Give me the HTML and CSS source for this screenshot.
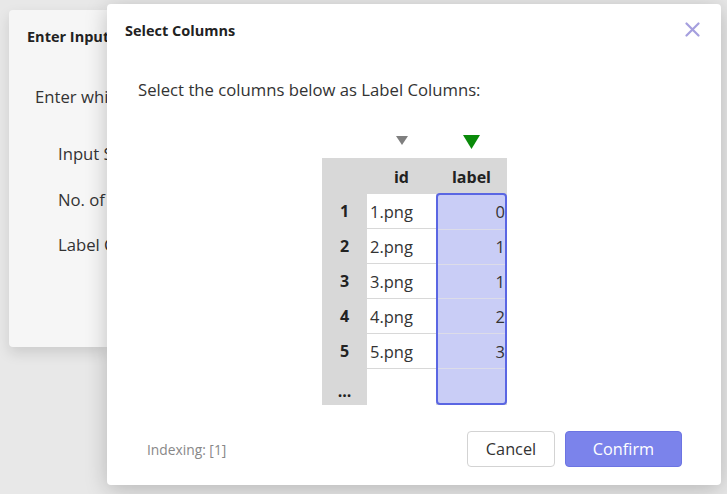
FILE: index.html
```html
<!DOCTYPE html>
<html>
<head>
<meta charset="utf-8">
<link rel="stylesheet" href="styles.css">
</head>
<body>
<div class="stage">
  <div class="dialog back">
    <div class="title">Enter Inputs</div>
    <div class="back-body">
      <p class="msg">Enter which settings to use:</p>
      <div class="field">Input Size</div>
      <div class="field">No. of Classes</div>
      <div class="field">Label Columns</div>
    </div>
  </div>

  <div class="dialog front">
    <div class="head">
      <div class="title">Select Columns</div>
      <svg class="close" width="15" height="15" viewBox="0 0 15 15"><path d="M1.5 1.5 L13.5 13.5 M13.5 1.5 L1.5 13.5" stroke="#a59fde" stroke-width="2.2" stroke-linecap="round" fill="none"/></svg>
    </div>
    <div class="main">
      <p class="msg">Select the columns below as Label Columns:</p>
      <div class="picker">
        <div class="arrows">
          <div class="arrow-cell"></div>
          <div class="arrow-cell"><svg width="12" height="9" viewBox="0 0 12 9"><path d="M0 0 H12 L6 9 Z" fill="#7f7f7f"/></svg></div>
          <div class="arrow-cell"><svg width="17" height="14" viewBox="0 0 17 14"><path d="M0 0 H17 L8.5 14 Z" fill="#0a8a0a"/></svg></div>
        </div>
        <div class="table">
          <div class="col idx">
            <div class="hcell"></div>
            <div class="cell">1</div>
            <div class="cell">2</div>
            <div class="cell">3</div>
            <div class="cell">4</div>
            <div class="cell">5</div>
            <div class="cell more">...</div>
          </div>
          <div class="col ids">
            <div class="hcell">id</div>
            <div class="cell">1.png</div>
            <div class="cell">2.png</div>
            <div class="cell">3.png</div>
            <div class="cell">4.png</div>
            <div class="cell">5.png</div>
            <div class="cell"></div>
          </div>
          <div class="col lab">
            <div class="hcell">label</div>
            <div class="sel">
              <div class="cell">0</div>
              <div class="cell">1</div>
              <div class="cell">1</div>
              <div class="cell">2</div>
              <div class="cell">3</div>
              <div class="cell"></div>
            </div>
          </div>
        </div>
      </div>
    </div>
    <div class="foot">
      <span class="indexing">Indexing: [1]</span>
      <div class="buttons">
        <button class="btn cancel">Cancel</button>
        <button class="btn confirm">Confirm</button>
      </div>
    </div>
  </div>
</div>
</body>
</html>
```

FILE: styles.css
```css
* { box-sizing: border-box; }
html, body { margin: 0; padding: 0; }
body {
  background: #e8e8e8;
  font-family: "Open Sans", "Noto Sans", sans-serif;
  color: #333;
  width: 727px;
  height: 494px;
  overflow: hidden;
}
.stage {
  position: relative;
  width: 727px;
  height: 494px;
}
.dialog {
  position: absolute;
  border-radius: 4px;
}
.back {
  left: 9px;
  top: 10px;
  width: 98px;
  height: 337px;
  background: #f6f6f6;
  box-shadow: 0 6px 14px rgba(0,0,0,0.12);
  padding: 17px 0 0 18px;
  overflow: hidden;
  white-space: nowrap;
  border-radius: 4px 0 0 4px;
}
.back .title { color: #222; }
.back-body { padding: 0 0 0 8px; }
.back .msg { margin: 38px 0 0; }
.back .field { margin: 0 0 0 23px; font-size: 16.7px; line-height: 24px; height: 45.5px; }
.back .field:first-of-type { margin-top: 33px; }

.front {
  left: 107px;
  top: 4px;
  width: 614px;
  height: 481px;
  background: #fff;
  box-shadow: 0 4px 22px rgba(0,0,0,0.22);
  display: flex;
  flex-direction: column;
}
.head {
  display: flex;
  justify-content: space-between;
  align-items: flex-start;
  padding: 17px 21px 0 18px;
}
.title {
  font-weight: 700;
  font-size: 14.5px;
  line-height: 20px;
  color: #222;
}
.close { margin-top: 1px; }
.main {
  flex: 1;
  padding: 0 0 0 31px;
}
.msg {
  margin: 37px 0 0;
  font-size: 16.7px;
  line-height: 24px;
  color: #333;
}
.picker {
  margin: 33px 0 0 184px;
  width: 185px;
}
.arrows {
  display: flex;
  height: 23px;
}
.arrow-cell { display: flex; justify-content: center; align-items: flex-start; }
.arrow-cell:nth-child(1) { width: 45px; }
.arrow-cell:nth-child(2) { width: 69px; padding-top: 1px; }
.arrow-cell:nth-child(3) { width: 71px; padding-top: 0; }
.table {
  display: flex;
  background: #d8d8d8;
  height: 247px;
}
.col { display: flex; flex-direction: column; }
.idx { width: 45px; }
.ids { width: 69px; }
.lab { width: 71px; }
.hcell {
  height: 35px;
  font-weight: 700;
  font-size: 16px;
  display: flex;
  align-items: center;
  justify-content: center;
  color: #222;
  padding-top: 3px;
}
.cell {
  height: 35px;
  font-size: 16.5px;
  display: flex;
  align-items: center;
}
.idx .cell { justify-content: center; font-weight: 700; color: #222; font-size: 16px; }
.idx .cell.more { align-items: flex-end; padding-bottom: 7px; height: 37px; line-height: 14px; }
.ids .cell {
  background: #fff;
  padding-left: 3px;
  height: 34px;
  margin-top: 1px;
}
.ids .cell:last-child { height: 36px; }
.sel {
  flex: 1;
  background: #c9cdf6;
  border: 2px solid #5a66e3;
  border-radius: 4px;
  display: flex;
  flex-direction: column;
}
.sel .cell {
  justify-content: flex-end;
  padding-right: 0;
  border-bottom: 1px solid #dcdce8;
  flex: 1;
}
.sel .cell:last-child { border-bottom: none; }
.foot {
  display: flex;
  justify-content: space-between;
  align-items: center;
  padding: 0 39px 18px 40px;
}
.indexing { font-size: 13.8px; color: #888; }
.buttons { display: flex; gap: 10px; }
.btn {
  height: 36px;
  border-radius: 4px;
  font-family: "Open Sans", "Noto Sans", sans-serif;
  font-size: 16.3px;
  padding: 0;
}
.cancel { width: 88px; background: #fff; border: 1px solid #d3d3d3; color: #333; }
.confirm { width: 117px; background: #7b83eb; border: 1px solid #6c74e2; color: #fff; }
```
